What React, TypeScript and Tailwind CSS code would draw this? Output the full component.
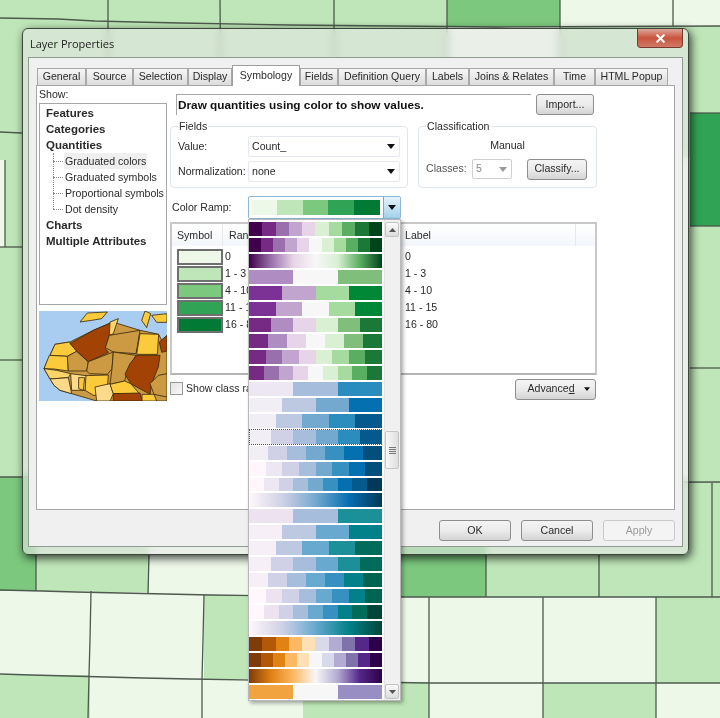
import { X } from 'lucide-react';

const L = '#edf8e9';
const A = '#bfe6b8';
const M = '#7cc87e';
const D = '#31a354';

// map polygons behind the dialog: x, y, w, h, colour
const cells: [number, number, number, number, string][] = [
    [0, 0, 108, 30, A], [108, 0, 113, 30, A], [221, 0, 113, 30, A], [334, 0, 113, 30, A],
    [447, 0, 113, 27, M], [560, 0, 113, 27, L], [673, 0, 47, 26, L],
    [0, 18, 108, 459, A], [0, 160, 5, 87, L], [108, 27, 113, 130, A], [221, 27, 113, 130, A], [334, 27, 114, 130, A],
    [448, 27, 112, 130, L], [560, 27, 130, 130, A], [690, 26, 30, 87, A],
    [690, 113, 30, 113, D], [690, 226, 30, 257, A], [690, 483, 30, 114, A],
    [0, 477, 36, 114, M], [36, 477, 113, 115, A], [149, 477, 113, 118, L], [262, 477, 224, 120, M],
    [486, 483, 113, 114, A], [599, 483, 121, 114, A],
    [0, 591, 90, 84, L], [90, 592, 114, 84, L], [204, 595, 100, 84, A], [304, 597, 125, 85, L],
    [429, 597, 114, 86, L], [543, 597, 113, 86, L], [656, 597, 64, 86, A],
    [0, 675, 90, 43, A], [90, 676, 113, 42, L], [203, 679, 100, 39, L], [303, 682, 126, 36, A],
    [429, 683, 114, 35, L], [543, 683, 113, 35, A], [656, 683, 64, 35, L],
];

const outlines = [
    'M0 18 L58 19 L95 21 L135 22 L180 23 L288 25 L497 27 L720 26',
    'M0 132 L22 133', 'M0 247 L22 247', 'M0 360 L22 360', 'M5 160 L5 247',
    'M690 113 L720 113', 'M690 226 L720 226', 'M690 368 L720 368',
    'M0 477 L36 477 L149 480 L300 482 L486 483 L720 482',
    'M0 590 L42 591 L76 592 L121 593 L165 594 L211 595 L280 596 L400 597 L720 597',
    'M0 674 L31 675 L69 676 L106 677 L143 678 L191 679 L300 681 L429 683 L720 683',
    'M108 0 L108 120', 'M220 0 L221 120', 'M334 0 L334 120', 'M447 0 L447 120', 'M560 0 L560 120', 'M673 0 L673 26',
    'M36 555 L36 591', 'M149 555 L148 594', 'M486 555 L486 597', 'M599 555 L599 597', 'M712 483 L712 597',
    'M91 591 L90 640 L89 675 L88 718', 'M204 595 L203 640 L202 679 L202 718',
    'M429 597 L429 718', 'M543 597 L543 718', 'M656 597 L656 718',
];

const ramps: (string[] | { grad: string[] })[] = [
    ['#40004b', '#762a83', '#9970ab', '#c2a5cf', '#e7d4e8', '#d9f0d3', '#a6dba0', '#5aae61', '#1b7837', '#00441b'],
    ['#40004b', '#762a83', '#9970ab', '#c2a5cf', '#e7d4e8', '#f7f7f7', '#d9f0d3', '#a6dba0', '#5aae61', '#1b7837', '#00441b'],
    { grad: ['#40004b', '#9970ab', '#e7d4e8', '#f7f7f7', '#d9f0d3', '#5aae61', '#00441b'] },
    ['#af8dc3', '#f7f7f7', '#7fbf7b'],
    ['#7b3294', '#c2a5cf', '#a6dba0', '#008837'],
    ['#7b3294', '#c2a5cf', '#f7f7f7', '#a6dba0', '#008837'],
    ['#762a83', '#af8dc3', '#e7d4e8', '#d9f0d3', '#7fbf7b', '#1b7837'],
    ['#762a83', '#af8dc3', '#e7d4e8', '#f7f7f7', '#d9f0d3', '#7fbf7b', '#1b7837'],
    ['#762a83', '#9970ab', '#c2a5cf', '#e7d4e8', '#d9f0d3', '#a6dba0', '#5aae61', '#1b7837'],
    ['#762a83', '#9970ab', '#c2a5cf', '#e7d4e8', '#f7f7f7', '#d9f0d3', '#a6dba0', '#5aae61', '#1b7837'],
    ['#ece7f2', '#a6bddb', '#2b8cbe'],
    ['#f1eef6', '#bdc9e1', '#74a9cf', '#0570b0'],
    ['#f1eef6', '#bdc9e1', '#74a9cf', '#2b8cbe', '#045a8d'],
    ['#f1eef6', '#d0d1e6', '#a6bddb', '#74a9cf', '#2b8cbe', '#045a8d'],
    ['#f1eef6', '#d0d1e6', '#a6bddb', '#74a9cf', '#3690c0', '#0570b0', '#034e7b'],
    ['#fff7fb', '#ece7f2', '#d0d1e6', '#a6bddb', '#74a9cf', '#3690c0', '#0570b0', '#034e7b'],
    ['#fff7fb', '#ece7f2', '#d0d1e6', '#a6bddb', '#74a9cf', '#3690c0', '#0570b0', '#045a8d', '#023858'],
    { grad: ['#fff7fb', '#d0d1e6', '#74a9cf', '#0570b0', '#023858'] },
    ['#ece2f0', '#a6bddb', '#1c9099'],
    ['#f6eff7', '#bdc9e1', '#67a9cf', '#02818a'],
    ['#f6eff7', '#bdc9e1', '#67a9cf', '#1c9099', '#016c59'],
    ['#f6eff7', '#d0d1e6', '#a6bddb', '#67a9cf', '#1c9099', '#016c59'],
    ['#f6eff7', '#d0d1e6', '#a6bddb', '#67a9cf', '#3690c0', '#02818a', '#016450'],
    ['#fff7fb', '#ece2f0', '#d0d1e6', '#a6bddb', '#67a9cf', '#3690c0', '#02818a', '#016450'],
    ['#fff7fb', '#ece2f0', '#d0d1e6', '#a6bddb', '#67a9cf', '#3690c0', '#02818a', '#016c59', '#014636'],
    { grad: ['#fff7fb', '#d0d1e6', '#67a9cf', '#02818a', '#014636'] },
    ['#7f3b08', '#b35806', '#e08214', '#fdb863', '#fee0b6', '#d8daeb', '#b2abd2', '#8073ac', '#542788', '#2d004b'],
    ['#7f3b08', '#b35806', '#e08214', '#fdb863', '#fee0b6', '#f7f7f7', '#d8daeb', '#b2abd2', '#8073ac', '#542788', '#2d004b'],
    { grad: ['#7f3b08', '#e08214', '#fdb863', '#f7f7f7', '#b2abd2', '#542788', '#2d004b'] },
    ['#f1a340', '#f7f7f7', '#998ec3'],
];

const tabs = [
    { name: 'General', w: 'w-[49px]' },
    { name: 'Source', w: 'w-[47px]' },
    { name: 'Selection', w: 'w-[55px]' },
    { name: 'Display', w: 'w-[44px]' },
    { name: 'Symbology', w: 'w-[68px]', active: true },
    { name: 'Fields', w: 'w-[38px]' },
    { name: 'Definition Query', w: 'w-[88px]' },
    { name: 'Labels', w: 'w-[43px]' },
    { name: 'Joins & Relates', w: 'w-[85px]' },
    { name: 'Time', w: 'w-[41px]' },
    { name: 'HTML Popup', w: 'w-[73px]' },
];

const classes = [
    { color: L, label: '0' },
    { color: A, label: '1 - 3' },
    { color: M, label: '4 - 10' },
    { color: D, label: '11 - 15' },
    { color: '#007a35', label: '16 - 80' },
];

function Arrow({ muted }: { muted?: boolean }) {
    return (
        <svg className="w-[8px] h-[5px]" viewBox="0 0 8 5">
            <path d="M0 0 H8 L4 5 Z" fill={muted ? '#9a9a9a' : '#111'} />
        </svg>
    );
}

function ScrollArrow({ up }: { up?: boolean }) {
    return (
        <div className={`absolute left-0 right-[1px] h-[15px] flex items-center justify-center bg-gradient-to-b from-[#fafafa] to-[#dcdcdc] border border-[#c4c4c4] rounded-[2px] ${up ? 'top-[2px]' : 'bottom-[1px]'}`}>
            <svg className="w-[7px] h-[4px]" viewBox="0 0 7 4">
                <path d={up ? 'M0 4 L3.5 0 L7 4 Z' : 'M0 0 L7 0 L3.5 4 Z'} fill="#555" />
            </svg>
        </div>
    );
}

function Combo({ value }: { value: string }) {
    return (
        <div className="w-[152px] h-[21px] flex items-center justify-between pl-[3px] pr-[4px] bg-white border border-[#e3e9ef] rounded-[2px]">
            <span>{value}</span>
            <Arrow />
        </div>
    );
}

function Button({ children, className }: { children: React.ReactNode; className: string }) {
    return (
        <div className={`flex items-center justify-center h-[21px] border border-[#8e8e8e] rounded-[3px] bg-gradient-to-b from-[#f4f4f4] via-[#ebebeb] to-[#d4d4d4] ${className}`}>
            {children}
        </div>
    );
}

function Group({ title, className, children }: { title: string; className: string; children: React.ReactNode }) {
    return (
        <div className={`relative h-[62px] border border-[#dde6ee] rounded-[4px] ${className}`}>
            <span className="absolute left-[7px] top-[-8px] px-[1px] bg-white leading-[14px]">{title}</span>
            {children}
        </div>
    );
}

function Preview() {
    const stroke = { stroke: '#3a2a10', strokeWidth: 2.5, strokeLinejoin: 'round' as const };
    return (
        <svg className="block w-[128px] h-[90px]" viewBox="27 272 384 270">
            <rect x="27" y="272" width="384" height="270" fill="#a9cdf1" />
            <g {...stroke}>
                <path d="M60 405 L75 372 L120 365 L190 330 L248 305 L330 330 L386 342 L411 392 L411 542 L200 542 L125 520 L90 510 L72 495 L42 445 Z" fill="#cc9a42" />
                <path d="M150 305 L172 278 L232 275 L215 295 L185 300 Z" fill="#fccb3c" />
                <path d="M345 272 L362 280 L350 322 L335 300 Z" fill="#fccb3c" />
                <path d="M365 285 L411 280 L411 306 L380 306 Z" fill="#fccb3c" />
                <path d="M60 405 L75 372 L118 365 L140 393 L112 408 Z" fill="#fccb3c" />
                <path d="M42 445 L58 405 L112 408 L115 452 L72 446 Z" fill="#fccb3c" />
                <path d="M112 408 L140 393 L175 425 L170 452 L115 452 Z" fill="#cc9a42" />
                <path d="M120 370 L190 330 L248 305 L238 345 L226 385 L236 396 L175 424 L140 392 Z" fill="#a24305" />
                <path d="M240 305 L265 295 L250 340 L238 345 Z" fill="#fcd568" />
                <path d="M238 345 L330 330 L318 400 L250 395 L226 382 Z" fill="#cc9a42" />
                <path d="M330 340 L386 342 L382 402 L320 402 Z" fill="#fccb3c" />
                <path d="M388 365 L411 345 L411 392 L395 396 Z" fill="#a24305" />
                <path d="M175 424 L250 395 L246 445 L232 462 L178 460 L170 452 Z" fill="#cc9a42" />
                <path d="M250 395 L318 405 L292 450 L284 482 L240 492 L246 445 Z" fill="#cc9a42" />
                <path d="M320 405 L390 405 L385 440 L365 490 L360 522 L302 490 L285 462 L300 430 Z" fill="#a24305" />
                <path d="M360 490 L385 465 L411 460 L411 530 L372 522 Z" fill="#cc9a42" />
                <path d="M165 466 L235 464 L232 505 L192 526 L165 510 Z" fill="#fccb3c" />
                <path d="M42 445 L80 450 L122 460 L115 472 L60 476 Z" fill="#fcd568" />
                <path d="M60 476 L115 472 L125 520 L90 510 L72 495 Z" fill="#fdd98a" />
                <path d="M122 460 L168 466 L165 510 L125 510 Z" fill="#fdd98a" />
                <path d="M146 472 L164 472 L160 510 L146 505 Z" fill="#fccb3c" />
                <path d="M195 500 L240 490 L250 520 L240 542 L200 542 Z" fill="#fdd98a" />
                <path d="M240 492 L284 482 L302 490 L330 522 L250 520 Z" fill="#fccb3c" />
                <path d="M250 520 L330 518 L336 542 L250 542 Z" fill="#a24305" />
                <path d="M336 522 L372 522 L380 542 L336 542 Z" fill="#fccb3c" />
            </g>
        </svg>
    );
}

export default function App() {
    return (
        <div className="relative w-[720px] h-[718px] overflow-hidden bg-[#edf8e9] text-[10.6px] text-[#2a2a2a] font-['Liberation_Sans',sans-serif]">
            {/* map behind the dialog */}
            <svg className="absolute inset-0" width="720" height="718" viewBox="0 0 720 718">
                {cells.map(([x, y, w, h, c], i) => (
                    <rect key={i} x={x} y={y} width={w} height={h} fill={c} />
                ))}
                {outlines.map((d, i) => (
                    <path key={i} d={d} fill="none" stroke="#4d5a4d" strokeWidth="1.3" />
                ))}
            </svg>

            {/* Layer Properties window */}
            <div className="absolute left-[22px] top-[28px] w-[667px] h-[527px] px-[5px] pb-[7px] flex flex-col rounded-[6px] border border-[#3c463c] bg-[#e8e8e8]/55 backdrop-blur-[4px] shadow-[2px_3px_10px_rgba(0,0,0,0.75)]">
                <div className="h-[28px] shrink-0 flex items-start justify-between">
                    <span className="mt-[8px] ml-[2px] leading-[14px] text-[11px] font-['Open_Sans',sans-serif] text-[#222] blur-[0.3px]">Layer Properties</span>
                    <div className="w-[46px] h-[19px] flex items-center justify-center rounded-b-[4px] border border-t-0 border-[#7a3a30] bg-gradient-to-b from-[#dba699] via-[#c9523c] to-[#cf7b66]">
                        <X className="w-[13px] h-[13px] text-white" strokeWidth={4} />
                    </div>
                </div>

                <div className="flex-1 flex flex-col bg-[#f0f0f0] border border-[#8f9a90] px-[7px] blur-[0.3px]">
                    {/* tabs */}
                    <div className="flex items-end h-[27px] pl-[1px] shrink-0">
                        {tabs.map((t) => (
                            <div
                                key={t.name}
                                className={t.active
                                    ? `${t.w} h-[21px] mb-[-1px] z-10 flex items-start justify-center pt-[2px] bg-white border border-b-0 border-[#9f9f9f] whitespace-nowrap`
                                    : `${t.w} h-[17px] flex items-center justify-center bg-gradient-to-b from-[#f6f6f6] to-[#dcdcdc] border border-b-0 border-[#a8a8a8] whitespace-nowrap`}
                            >
                                {t.name}
                            </div>
                        ))}
                    </div>

                    {/* Symbology panel */}
                    <div className="w-[639px] h-[425px] shrink-0 flex gap-[3px] pl-[2px] bg-white border border-[#a6a6a6]">
                        <div className="w-[128px] shrink-0">
                            <div className="h-[17px] pt-[2px] leading-[13px]">Show:</div>
                            <div className="h-[202px] py-[1px] border border-[#a6a6a6] pl-[6px]">
                                {['Features', 'Categories', 'Quantities'].map((n) => (
                                    <div key={n} className="h-[16px] leading-[16px] font-bold text-[11.5px]">{n}</div>
                                ))}
                                <div className="relative pl-[19px]">
                                    <span className="absolute left-[7px] top-0 h-[56px] border-l border-dotted border-[#888]" />
                                    {['Graduated colors', 'Graduated symbols', 'Proportional symbols', 'Dot density'].map((n, i) => (
                                        <div key={n} className="relative h-[16px] leading-[16px] whitespace-nowrap">
                                            <span className="absolute left-[-12px] top-[8px] w-[10px] border-t border-dotted border-[#888]" />
                                            <span className={i === 0 ? 'bg-[#efefef] px-[1px] ml-[-1px] inline-block' : ''}>{n}</span>
                                        </div>
                                    ))}
                                </div>
                                {['Charts', 'Multiple Attributes'].map((n) => (
                                    <div key={n} className="h-[16px] leading-[16px] font-bold text-[11.5px]">{n}</div>
                                ))}
                            </div>
                            <div className="mt-[6px]">
                                <Preview />
                            </div>
                        </div>

                        <div className="w-[427px] shrink-0 pt-[8px]">
                            <div className="flex items-start pl-[6px] h-[21px]">
                                <div className="w-[355px] h-[21px] pl-[1px] pt-[3px] border-l border-t border-[#a6a6a6] leading-[14px] font-bold text-[11.8px] text-[#111]">
                                    Draw quantities using color to show values.
                                </div>
                                <Button className="ml-[5px] w-[58px]">Import...</Button>
                            </div>

                            <div className="flex gap-[10px] mt-[11px]">
                                <Group title="Fields" className="w-[238px] pl-[7px] pt-[9px]">
                                    <div className="flex items-center h-[21px]">
                                        <span className="w-[70px]">Value:</span>
                                        <Combo value="Count_" />
                                    </div>
                                    <div className="flex items-center h-[21px] mt-[4px]">
                                        <span className="w-[70px]">Normalization:</span>
                                        <Combo value="none" />
                                    </div>
                                </Group>
                                <Group title="Classification" className="w-[179px] pl-[7px]">
                                    <div className="text-center pr-[7px] pt-[11px] leading-[14px]">Manual</div>
                                    <div className="flex items-center mt-[6px] h-[22px]">
                                        <span className="w-[46px] text-[#555]">Classes:</span>
                                        <div className="w-[40px] h-[20px] flex items-center justify-between pl-[3px] pr-[4px] border border-[#cfcfcf] rounded-[2px] text-[#888]">
                                            <span>5</span>
                                            <Arrow muted />
                                        </div>
                                        <Button className="ml-[15px] w-[60px]">Classify...</Button>
                                    </div>
                                </Group>
                            </div>

                            <div className="flex items-center h-[23px] mt-[8px] pl-[2px]">
                                <span className="w-[76px]">Color Ramp:</span>
                                <div className="w-[153px] h-[23px] flex border border-[#8fb6d3] rounded-[2px] bg-white">
                                    <div className="w-[131px] flex pl-[2px] py-[3px]">
                                        {[L, A, M, D, '#007a35'].map((c) => (
                                            <div key={c} className="flex-1" style={{ backgroundColor: c }} />
                                        ))}
                                    </div>
                                    <div className="flex-1 ml-[3px] flex items-center justify-center bg-gradient-to-b from-[#e4f3fb] to-[#a4d0ea] border-l border-[#7da9c6]">
                                        <Arrow />
                                    </div>
                                </div>
                            </div>

                            <div className="h-[153px] mt-[3px] border-2 border-[#c8c8c8] border-b-[#b4b4b4]">
                                <div className="flex h-[22px] items-center bg-gradient-to-b from-white to-[#f3f6fa]">
                                    <span className="w-[51px] pl-[5px] border-r border-[#e8e8e8] leading-[22px]">Symbol</span>
                                    <span className="w-[181px] pl-[6px] leading-[22px]">Range</span>
                                    <span className="flex-1 pl-[1px] leading-[22px] border-r border-[#e8e8e8]">Label</span>
                                    <span className="w-[19px]" />
                                </div>
                                <div className="pt-[3px] pl-[5px]">
                                    {classes.map((c) => (
                                        <div key={c.label} className="flex items-start h-[17px] leading-[15px]">
                                            <div className="w-[46px] h-[16px] border-2 border-[#6f6f6f]" style={{ backgroundColor: c.color }} />
                                            <span className="w-[182px] pl-[2px]">{c.label}</span>
                                            <span>{c.label}</span>
                                        </div>
                                    ))}
                                </div>
                            </div>

                            <div className="flex items-center justify-between h-[20px] mt-[4px]">
                                <div className="flex items-center gap-[3px]">
                                    <div className="w-[13px] h-[13px] border border-[#999] bg-gradient-to-br from-[#e4e4e4] to-[#f8f8f8]" />
                                    <span>Show class ranges using feature values</span>
                                </div>
                                <Button className="w-[81px] h-[20px] mr-[1px] gap-[9px] pl-[6px]">
                                    <span>Advance<span className="underline">d</span></span>
                                    <svg className="w-[6px] h-[4px]" viewBox="0 0 8 5"><path d="M0 0 H8 L4 5 Z" fill="#111" /></svg>
                                </Button>
                            </div>
                        </div>
                    </div>

                    {/* dialog buttons */}
                    <div className="flex justify-end gap-[10px] mt-[10px]">
                        <Button className="w-[72px] border-[#3ea4dc] from-[#eef7fc] via-[#dfeaf2] to-[#c6d9e6]">OK</Button>
                        <Button className="w-[72px]">Cancel</Button>
                        <Button className="w-[72px] border-[#c9c9c9] from-[#f4f4f4] via-[#f4f4f4] to-[#f4f4f4] text-[#9a9a9a]">Apply</Button>
                    </div>
                </div>
            </div>

            {/* open colour ramp list */}
            <div className="absolute left-[248px] top-[219px] w-[153px] h-[482px] flex bg-white border border-[#b9b9b9] shadow-[2px_2px_4px_rgba(0,0,0,0.35)] blur-[0.3px]">
                <div className="w-[134px] pr-[1px] pt-[1px] shrink-0 flex flex-col">
                    {ramps.map((r, i) => (
                        <div key={i} className={i === 13 ? 'h-[16px] flex py-[1px] outline outline-1 outline-dotted outline-[#555] -outline-offset-1' : 'h-[16px] flex py-[1px]'}>
                            {Array.isArray(r)
                                ? r.map((c, j) => <div key={j} className="flex-1" style={{ backgroundColor: c }} />)
                                : <div className="flex-1" style={{ backgroundImage: `linear-gradient(to right, ${r.grad.join(',')})` }} />}
                        </div>
                    ))}
                </div>
                <div className="relative flex-1 ml-[1px] bg-[#f0f0f0] border-l border-[#e4e4e4]">
                    <ScrollArrow up />
                    <div className="absolute left-0 right-[1px] top-[211px] h-[38px] flex flex-col items-center justify-center gap-[1px] bg-gradient-to-r from-[#f8f8f8] to-[#dedede] border border-[#c4c4c4] rounded-[2px]">
                        <span className="w-[7px] border-t border-[#777]" />
                        <span className="w-[7px] border-t border-[#777]" />
                        <span className="w-[7px] border-t border-[#777]" />
                        <span className="w-[7px] border-t border-[#777]" />
                    </div>
                    <ScrollArrow />
                </div>
            </div>
        </div>
    );
}
